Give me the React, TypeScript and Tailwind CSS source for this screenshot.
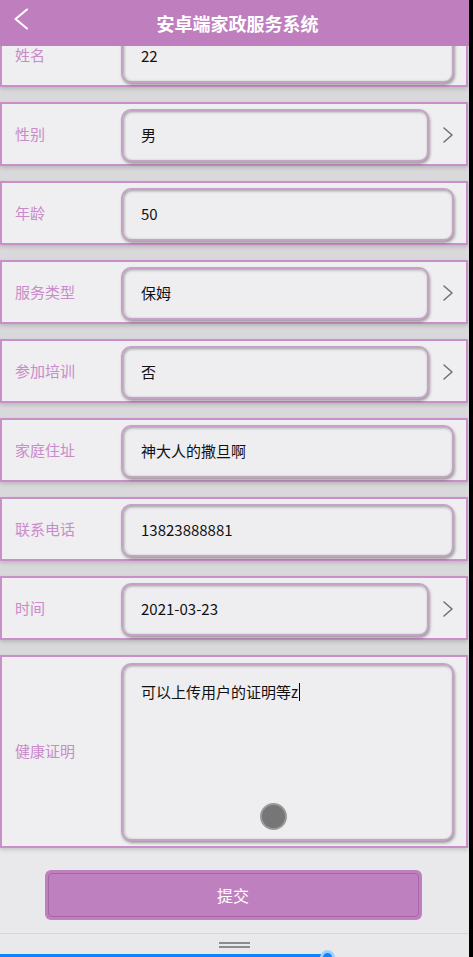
type Field = { label: string; value: string; arrow?: boolean }

const fields: Field[] = [
  { label: '姓名', value: '22' },
  { label: '性别', value: '男', arrow: true },
  { label: '年龄', value: '50' },
  { label: '服务类型', value: '保姆', arrow: true },
  { label: '参加培训', value: '否', arrow: true },
  { label: '家庭住址', value: '神大人的撒旦啊' },
  { label: '联系电话', value: '13823888881' },
  { label: '时间', value: '2021-03-23', arrow: true },
]

const font = "font-['Noto_Sans_CJK_SC','Noto_Sans',sans-serif]"

const boxCls =
  'rounded-[10px] border-2 border-[#c4a3c6] bg-[#eeedf0] shadow-[inset_1px_1px_3px_rgba(0,0,0,0.35),1px_2px_3px_rgba(0,0,0,0.35)]'

function Row({ field }: { field: Field }) {
  return (
    <div className="flex h-[64px] items-center border-2 border-[#c98fc9] bg-[#efeef0] shadow-[0_2px_4px_rgba(0,0,0,0.15)]">
      <div className="w-[119px] pl-[13px] text-[15px] text-[#c98bca]">{field.label}</div>
      <div
        className={`${boxCls} mt-[2px] flex h-[53px] items-center pl-[18px] text-[15px] text-[#111] ${
          field.arrow ? 'w-[308px]' : 'w-[333px]'
        }`}
      >
        {field.value}
      </div>
      {field.arrow && (
        <svg className="ml-[12px] mt-[2px]" width="14" height="18" viewBox="0 0 14 18" fill="none">
          <path d="M3 2 L11 9 L3 16" stroke="#6f7378" strokeWidth="1.6" strokeLinecap="round" strokeLinejoin="round" />
        </svg>
      )}
    </div>
  )
}

export default function App() {
  return (
    <div className={`${font} relative h-[957px] w-[473px] overflow-hidden bg-black`}>
      <div className="relative h-full w-[469px] overflow-hidden bg-[#e9e8ea]">
        <div className="absolute inset-x-0 top-0 z-10 flex h-[46px] items-center justify-center bg-[#bf7fbe]">
          <svg className="absolute left-[12px] top-[8px]" width="18" height="22" viewBox="0 0 18 22" fill="none">
            <path d="M15 1.5 L3.5 11 L15 20.5" stroke="white" strokeWidth="2" strokeLinecap="round" strokeLinejoin="round" />
          </svg>
          <span className="ml-[6px] text-[18px] font-bold text-white">安卓端家政服务系统</span>
        </div>

        <div className="flex flex-col gap-[15px] bg-[#d9d8da] pt-[23px] pr-[1px]">
          {fields.map((f) => (
            <Row key={f.label} field={f} />
          ))}
          <div className="flex h-[193px] items-center border-2 border-[#c98fc9] bg-[#efeef0] shadow-[0_2px_4px_rgba(0,0,0,0.15)]">
            <div className="w-[119px] pl-[13px] text-[15px] text-[#c98bca]">健康证明</div>
            <div className={`${boxCls} relative h-[178px] w-[333px] pl-[18px] pt-[15px] text-[15px] text-[#111]`}>
              <span>可以上传用户的证明等z</span>
              <span className="ml-[1px] inline-block h-[18px] w-px translate-y-[3px] bg-black" />
              <div className="absolute left-[137px] top-[138px] size-[27px] rounded-full border-2 border-[#9a9a9a] bg-[#767676]" />
            </div>
          </div>
        </div>

        <div className="flex flex-col items-center bg-[#e9e8ea] pt-[22px]">
          <button className="ml-[-3px] flex h-[50px] w-[377px] items-center justify-center rounded-[6px] bg-[#bf80bf] p-[3px]">
            <span className="flex h-full w-full items-center justify-center rounded-[4px] border border-[#a866a8] text-[16px] text-white">
              提交
            </span>
          </button>
        </div>

        <div className="absolute inset-x-0 bottom-0 h-[24px] border-t border-[#d6d5d7] bg-[#e9e8ea]">
          <div className="absolute left-[219px] top-[8px] flex w-[31px] flex-col gap-[2px]">
            <div className="h-[2px] bg-[#8c8c8c]" />
            <div className="h-[2px] bg-[#8c8c8c]" />
          </div>
          <div className="absolute bottom-0 left-0 h-[3px] w-[327px] bg-[#0a84ff]" />
          <div className="absolute bottom-[-8px] left-[320px] size-[15px] rounded-full border-[3px] border-[#9fd0ff] bg-[#0a84ff]" />
        </div>
      </div>
    </div>
  )
}
